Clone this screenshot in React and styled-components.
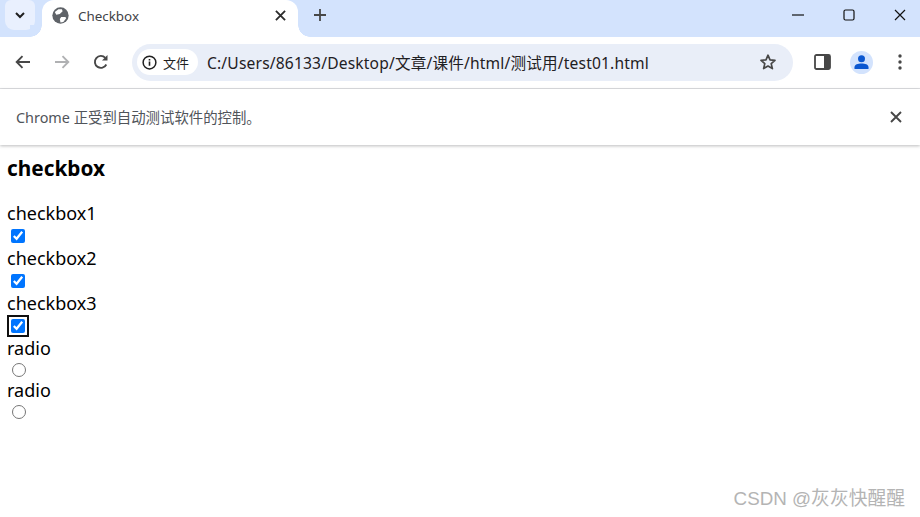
import React from "react";
import styled, { createGlobalStyle } from "styled-components";

const GlobalStyle = createGlobalStyle`
  html, body {
    margin: 0;
    padding: 0;
    background: #fff;
  }
  body {
    font-family: "Noto Sans", "Noto Sans CJK SC", sans-serif;
    overflow: hidden;
  }
`;

const Window = styled.div`
  position: relative;
  width: 920px;
  height: 517px;
  overflow: hidden;
  display: flex;
  flex-direction: column;
`;

const TabStrip = styled.div`
  height: 37px;
  flex: none;
  display: flex;
  align-items: flex-start;
  background: #d3e3fd;
  padding-left: 5px;
`;

const TabSearch = styled.button`
  width: 30px;
  height: 30px;
  border: 0;
  padding: 0;
  border-radius: 0 0 9px 9px;
  border-top-left-radius: 6px;
  border-top-right-radius: 6px;
  background: #e9f0fe;
  display: flex;
  align-items: center;
  justify-content: center;
`;

const Tab = styled.div`
  position: relative;
  width: 256px;
  height: 37px;
  margin-left: 7px;
  box-sizing: border-box;
  padding: 0 11px 6px 10px;
  background: #fff;
  border-radius: 12px 12px 0 0;
  display: flex;
  align-items: center;
  gap: 9px;

  &::before,
  &::after {
    content: "";
    position: absolute;
    bottom: 0;
    width: 12px;
    height: 12px;
  }
  &::before {
    left: -12px;
    background: radial-gradient(circle at 0 0, #d3e3fd 11.5px, #fff 12px);
  }
  &::after {
    right: -12px;
    background: radial-gradient(circle at 100% 0, #d3e3fd 11.5px, #fff 12px);
  }
`;

const TabTitle = styled.span`
  flex: 1;
  font-size: 13.4px;
  color: #3f4347;
`;

const IconButton = styled.button`
  width: ${(p) => p.$size || 16}px;
  height: ${(p) => p.$size || 16}px;
  flex: none;
  border: 0;
  padding: 0;
  background: transparent;
  display: flex;
  align-items: center;
  justify-content: center;
`;

const NewTab = styled(IconButton)`
  margin: 7px 0 0 14px;
`;

const WindowControls = styled.div`
  margin-left: auto;
  margin-right: -5px;
  display: flex;
  height: 30px;
`;

const WindowButton = styled.button`
  width: 51px;
  border: 0;
  padding: 0;
  background: transparent;
  display: flex;
  align-items: center;
  justify-content: center;
`;

const Toolbar = styled.div`
  height: 52px;
  flex: none;
  box-sizing: border-box;
  border-bottom: 1px solid #dedfe2;
  background: #fff;
  display: flex;
  align-items: center;
  padding: 0 9px 1px 13px;
`;

const NavButtons = styled.div`
  display: flex;
  align-items: center;
  gap: 19px;
  margin-right: 21px;
`;

const AddressBar = styled.div`
  width: 661px;
  height: 37px;
  flex: none;
  box-sizing: border-box;
  border-radius: 19px;
  background: #e9eef8;
  display: flex;
  align-items: center;
  padding: 0 16px 0 5px;
`;

const SecurityChip = styled.div`
  height: 26px;
  width: 61px;
  flex: none;
  box-sizing: border-box;
  border-radius: 13px;
  background: #fff;
  display: flex;
  align-items: center;
  gap: 6px;
  padding-left: 5px;
  font-size: 13px;
  color: #1f1f1f;
`;

const Url = styled.span`
  flex: 1;
  margin-left: 9px;
  font-size: 15.6px;
  letter-spacing: 0.17px;
  color: #1f2023;
  white-space: nowrap;
`;

const ToolbarActions = styled.div`
  display: flex;
  align-items: center;
  margin-left: 20px;
  gap: 19px;
`;

const Avatar = styled.div`
  width: 23px;
  height: 23px;
  border-radius: 50%;
  background: #d3e3fd;
  display: flex;
  align-items: center;
  justify-content: center;
`;

const InfoBar = styled.div`
  position: relative;
  height: 56px;
  flex: none;
  box-sizing: border-box;
  display: flex;
  align-items: center;
  justify-content: space-between;
  padding: 0 17px 0 16px;
  background: #fff;
  box-shadow: 0 1px 3px rgba(60, 64, 67, 0.35);
  font-size: 14.4px;
  color: #50545a;
`;

const InfoText = styled.span`
  margin-bottom: 2px;
`;

const Content = styled.main`
  padding: 9px 7px 0;
  color: #000;
`;

const Heading = styled.h3`
  margin: 0 0 19px;
  font-size: 20.8px;
  line-height: 28px;
  font-weight: 700;
`;

const FieldLabel = styled.div`
  font-size: 18px;
  line-height: 24px;
`;

const Field = styled.div`
  height: ${(p) => (p.$radio ? 42 : 45)}px;
`;

const Box = styled.input`
  display: block;
  width: 14px;
  height: 14px;
  margin: 4px 0 0 4px;
  accent-color: #0075ff;

  &[type="radio"] {
    margin: 3px 0 0 5px;
  }

  ${(p) =>
    p.$focused &&
    `
    outline: 2.5px solid #101010;
    outline-offset: 2px;
    border-radius: 5px;
  `}
`;

const Watermark = styled.div`
  position: absolute;
  right: 15px;
  bottom: 7px;
  font-family: "Liberation Sans", "Noto Sans CJK SC", sans-serif;
  font-size: 18.8px;
  color: #b4b4b4;
  white-space: nowrap;
`;

const fields = [
  { label: "checkbox1", type: "checkbox", checked: true },
  { label: "checkbox2", type: "checkbox", checked: true },
  { label: "checkbox3", type: "checkbox", checked: true, focused: true },
  { label: "radio", type: "radio", name: "r1" },
  { label: "radio", type: "radio", name: "r2" },
];

function Cross({ size = 12, color = "#3c3c3c", width = 1.8 }) {
  return (
    <svg width={size} height={size} viewBox="0 0 12 12">
      <path d="M1 1 11 11M11 1 1 11" stroke={color} strokeWidth={width} fill="none" />
    </svg>
  );
}

export default function App() {
  return (
    <Window>
      <GlobalStyle />
      <TabStrip>
        <TabSearch>
          <svg width="12" height="8" viewBox="0 0 12 8">
            <path d="M2 2 6 6 10 2" stroke="#1f1f1f" strokeWidth="2" fill="none" />
          </svg>
        </TabSearch>
        <Tab>
          <svg width="17" height="17" viewBox="0 0 24 24" style={{ flex: "none" }}>
            <circle cx="12" cy="12" r="11.5" fill="#5f6368" />
            <path d="M4 7 9 3h5l1 3-4 4-5 1Z" fill="#fff" />
            <path d="M13 14h6l1 2-4 5-4 1-1-5Z" fill="#fff" />
          </svg>
          <TabTitle>Checkbox</TabTitle>
          <IconButton $size={14}>
            <Cross size={11} color="#2b2b2b" width={2} />
          </IconButton>
        </Tab>
        <NewTab>
          <svg width="14" height="14" viewBox="0 0 14 14">
            <path d="M7 1v12M1 7h12" stroke="#474747" strokeWidth="1.8" fill="none" />
          </svg>
        </NewTab>
        <WindowControls>
          <WindowButton>
            <svg width="12" height="2" viewBox="0 0 12 2">
              <path d="M0 1h12" stroke="#111" strokeWidth="1.200" />
            </svg>
          </WindowButton>
          <WindowButton>
            <svg width="12" height="12" viewBox="0 0 12 12">
              <rect x="1" y="1" width="10" height="10" rx="1.500" stroke="#111" strokeWidth="1.200" fill="none" />
            </svg>
          </WindowButton>
          <WindowButton>
            <Cross size={12} color="#111" width={1.2} />
          </WindowButton>
        </WindowControls>
      </TabStrip>

      <Toolbar>
        <NavButtons>
          <IconButton $size={20}>
            <svg width="16" height="14" viewBox="0 0 16 14">
              <path d="M15 7H2M7.500 1.200 1.700 7l5.800 5.800" stroke="#474747" strokeWidth="1.900" fill="none" />
            </svg>
          </IconButton>
          <IconButton $size={20}>
            <svg width="16" height="14" viewBox="0 0 16 14">
              <path d="M1 7h13M8.500 1.200 14.300 7l-5.800 5.800" stroke="#b0b1b3" strokeWidth="1.900" fill="none" />
            </svg>
          </IconButton>
          <IconButton $size={20}>
            <svg width="16" height="16" viewBox="0 0 16 16">
              <path d="M13.300 10.500A6 6 0 1 1 12.300 3.800" stroke="#474747" strokeWidth="1.900" fill="none" />
              <path d="M14.500 1v5.500H9Z" fill="#474747" />
            </svg>
          </IconButton>
        </NavButtons>
        <AddressBar>
          <SecurityChip>
            <svg width="15" height="15" viewBox="0 0 16 16" style={{ flex: "none" }}>
              <circle cx="8" cy="8" r="6.800" stroke="#1f1f1f" strokeWidth="1.600" fill="none" />
              <path d="M8 7v4.500M8 4.200v1.600" stroke="#1f1f1f" strokeWidth="1.700" />
            </svg>
            <span>文件</span>
          </SecurityChip>
          <Url>C:/Users/86133/Desktop/文章/课件/html/测试用/test01.html</Url>
          <IconButton $size={18}>
            <svg width="18" height="18" viewBox="0 0 18 18">
              <path
                d="M9 2.200 11 6.900l5 .4-3.800 3.300 1.200 5L9 13l-4.400 2.600 1.200-5L2 7.300l5-.4Z"
                stroke="#474747"
                strokeWidth="1.700"
                strokeLinejoin="round"
                fill="none"
              />
            </svg>
          </IconButton>
        </AddressBar>
        <ToolbarActions>
          <IconButton $size={18}>
            <svg width="17" height="16" viewBox="0 0 17 16">
              <rect x="1" y="1" width="15" height="14" rx="1.500" stroke="#474747" strokeWidth="1.800" fill="#fff" />
              <rect x="10" y="1" width="6" height="14" fill="#474747" />
            </svg>
          </IconButton>
          <Avatar>
            <svg width="15" height="14" viewBox="0 0 15 14">
              <circle cx="7.500" cy="3.700" r="3.500" fill="#0b57d0" />
              <path d="M0.500 14v-1.800C0.500 9.500 4 8.500 7.500 8.500s7 1 7 3.700V14Z" fill="#0b57d0" />
            </svg>
          </Avatar>
          <IconButton $size={16}>
            <svg width="4" height="16" viewBox="0 0 4 16">
              <circle cx="2" cy="2" r="1.700" fill="#474747" />
              <circle cx="2" cy="8" r="1.700" fill="#474747" />
              <circle cx="2" cy="14" r="1.700" fill="#474747" />
            </svg>
          </IconButton>
        </ToolbarActions>
      </Toolbar>

      <InfoBar>
        <InfoText>Chrome 正受到自动测试软件的控制。</InfoText>
        <IconButton $size={14}>
          <Cross size={12} color="#474747" width={1.900} />
        </IconButton>
      </InfoBar>

      <Content>
        <Heading>checkbox</Heading>
        {fields.map((f, i) => (
          <Field key={i} $radio={f.type === "radio"}>
            <FieldLabel>{f.label}</FieldLabel>
            <Box type={f.type} name={f.name} defaultChecked={f.checked} $focused={f.focused} />
          </Field>
        ))}
      </Content>

      <Watermark>CSDN @灰灰快醒醒</Watermark>
    </Window>
  );
}
